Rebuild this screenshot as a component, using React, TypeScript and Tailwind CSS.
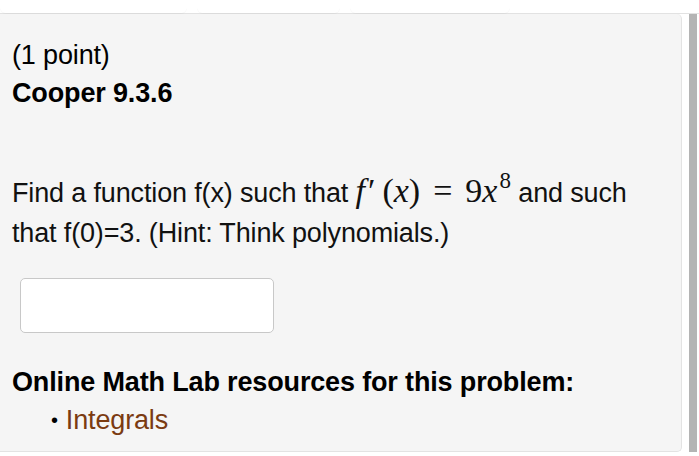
export default function App() {
  return (
    <div className="flex h-[456px] w-[699px] flex-col overflow-hidden bg-white font-['Liberation_Sans',Arial,sans-serif] text-black">
      <div className="flex h-[14px] shrink-0 gap-[10px] border-b border-[#e2e2e2]">
        <div className="w-[187px] rounded-b-[6px] bg-white shadow-[0_1px_1px_rgba(0,0,0,0.03)]" />
        <div className="w-[143px] rounded-b-[6px] bg-white shadow-[0_1px_1px_rgba(0,0,0,0.03)]" />
        <div className="w-[160px] rounded-b-[6px] bg-white shadow-[0_1px_1px_rgba(0,0,0,0.03)]" />
      </div>
      <div className="flex h-[438px] shrink-0">
        <div className="w-[682px] shrink-0 rounded-r-[5px] border-r border-b border-[#e3e3e3] bg-[#f5f5f5] pl-[12px] pt-[22px] text-[27px] tracking-[-0.15px]">
          <div className="leading-[38px]">(1 point)</div>
          <div className="font-bold leading-[38px]">Cooper 9.3.6</div>
          <div className="mt-[61px] h-[80px] leading-[40px] text-[#111]">
            Find a function f(x) such that{' '}
            <span className="font-['Liberation_Serif','Times_New_Roman',serif] text-[34px] leading-none tracking-normal">
              <i>f</i>
              <span className="ml-[3px]">′</span>
              <span className="ml-[7px]">(</span>
              <i>x</i>)<span className="mx-[13px]">=</span>9<i>x</i>
              <sup className="relative -top-[14px] ml-[2px] text-[23px] leading-none">8</sup>
            </span>{' '}
            and such
            <br />
            that f(0)=3. (Hint: Think polynomials.)
          </div>
          <div className="ml-[8px] mt-[25px] h-[55px] w-[254px] rounded-[5px] border border-[#c8c8c8] bg-white" />
          <div className="mt-[30px] font-bold leading-[38px]">Online Math Lab resources for this problem:</div>
          <div className="flex items-center pl-[39px] leading-[38px]">
            <span className="mr-[8px] text-[20px]">•</span>
            <span className="text-[#7b3b12]">Integrals</span>
          </div>
        </div>
        <div className="w-[7px] shrink-0" />
        <div className="w-[8px] shrink-0 bg-[#b4b4b4]" />
      </div>
    </div>
  );
}
